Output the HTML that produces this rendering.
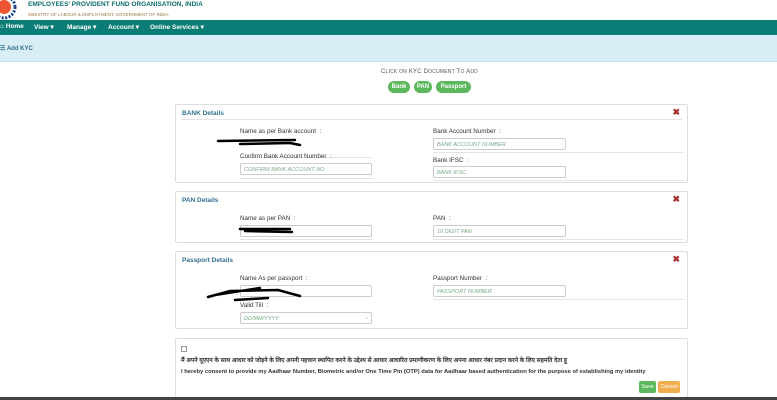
<!DOCTYPE html>
<html><head><meta charset="utf-8"><style>
*{margin:0;padding:0;box-sizing:border-box}
body{width:777px;height:400px;overflow:hidden;background:#fff;font-family:"Liberation Sans",sans-serif;position:relative;color:#333}
.a{position:absolute;white-space:nowrap}
.nav{left:0;top:20px;width:777px;height:15px;background:#0b7d77}
.nav span{position:absolute;top:3px;color:#fff;font-size:6.5px;font-weight:bold}
.band{left:0;top:35px;width:777px;height:27px;background:#d9edf7;border-bottom:1px solid #c4e3f0}
.panel{position:absolute;left:175px;width:513px;border:1px solid #ddd;border-radius:2px;background:#fff}
.t{font-size:6.5px;font-weight:bold;color:#31708f}
.l{font-size:6.3px;color:#333}
.in{position:absolute;height:12px;border:1px solid #ccc;border-radius:2px;font-size:5.5px;font-style:italic;color:#7a8;padding:3px 0 0 3px;white-space:nowrap;background:#fff}
.hr{position:absolute;height:1px;background:#e4e4e4}
.x{position:absolute;right:7px;color:#a33;font-size:9px;font-weight:bold}
.btn{position:absolute;top:81px;height:12px;border-radius:6px;background:#5cb85c;color:#fff;font-size:6px;font-weight:bold;text-align:center;line-height:12px}
</style></head><body>
<svg class="a" style="left:0;top:0" width="20" height="20"><circle cx="4" cy="7" r="11" fill="none" stroke="#1a3d8f" stroke-width="3" stroke-dasharray="2 1.5"/><circle cx="4" cy="7" r="7" fill="#e53"/></svg>
<div class="a" style="left:28px;top:1px;font-size:6.5px;font-weight:bold;color:#0b6e68">EMPLOYEES' PROVIDENT FUND ORGANISATION, INDIA</div>
<div class="a" style="left:28px;top:12px;font-size:4.5px;color:#a0764a">MINISTRY OF LABOUR &amp; EMPLOYMENT, GOVERNMENT OF INDIA</div>
<div class="a nav"><span style="left:0">⌂ Home</span><span style="left:34px">View ▾</span><span style="left:67px">Manage ▾</span><span style="left:108px">Account ▾</span><span style="left:150px">Online Services ▾</span></div>
<div class="a band"></div>
<div class="a" style="left:0;top:45px;font-size:6px;font-weight:bold;color:#31708f">☰ Add KYC</div>
<div class="a" style="left:381px;top:69px;font-size:6px;color:#555;letter-spacing:.2px">C<small>LICK ON</small> KYC D<small>OCUMENT</small> T<small>O</small> A<small>DD</small></div>
<div class="btn a" style="left:388px;width:22px">Bank</div>
<div class="btn a" style="left:414px;width:18px">PAN</div>
<div class="btn a" style="left:436px;width:35px">Passport</div>

<div class="panel" style="top:104px;height:79px">
<div class="a t" style="left:6px;top:5px">BANK Details</div><div class="x" style="top:2px">✖</div>
<div class="hr" style="left:5px;right:5px;top:14px"></div>
<div class="a l" style="left:64px;top:23px">Name as per Bank account &nbsp;:</div>
<div class="a l" style="left:257px;top:23px">Bank Account Number &nbsp;:</div>
<div class="in" style="left:257px;top:33px;width:133px">BANK ACCOUNT NUMBER</div>
<div class="hr" style="left:64px;width:132px;top:52px"></div>
<div class="hr" style="left:257px;width:251px;top:47px"></div>
<div class="a l" style="left:64px;top:48px">Confirm Bank Account Number &nbsp;:</div>
<div class="a l" style="left:257px;top:52px">Bank IFSC &nbsp;:</div>
<div class="in" style="left:64px;top:58px;width:132px">CONFIRM BANK ACCOUNT NO</div>
<div class="in" style="left:257px;top:61px;width:133px">BANK IFSC</div>
<div class="hr" style="left:64px;width:132px;top:73px"></div>
<div class="hr" style="left:257px;width:251px;top:75px"></div>
</div>

<div class="panel" style="top:191px;height:52px">
<div class="a t" style="left:6px;top:5px">PAN Details</div><div class="x" style="top:2px">✖</div>
<div class="a l" style="left:64px;top:23px">Name as per PAN &nbsp;:</div>
<div class="a l" style="left:257px;top:23px">PAN &nbsp;:</div>
<div class="in" style="left:64px;top:33px;width:132px"></div>
<div class="in" style="left:257px;top:33px;width:133px">10 DIGIT PAN</div>
<div class="hr" style="left:64px;width:132px;top:47px"></div>
<div class="hr" style="left:257px;width:251px;top:47px"></div>
</div>

<div class="panel" style="top:251px;height:78px">
<div class="a t" style="left:6px;top:5px">Passport Details</div><div class="x" style="top:2px">✖</div>
<div class="a l" style="left:64px;top:23px">Name As per passport &nbsp;:</div>
<div class="a l" style="left:257px;top:23px">Passport Number &nbsp;:</div>
<div class="in" style="left:64px;top:33px;width:132px"></div>
<div class="in" style="left:257px;top:33px;width:133px">PASSPORT NUMBER</div>
<div class="hr" style="left:257px;width:251px;top:47px"></div>
<div class="a l" style="left:64px;top:50px">Valid Till &nbsp;:</div>
<div class="in" style="left:64px;top:60px;width:132px">DD/MM/YYYY<span style="position:absolute;right:3px;font-style:normal">▫</span></div>
</div>

<div class="panel" style="top:338px;height:60px">
<div class="a" style="left:5px;top:7px;width:6px;height:6px;border:1px solid #999"></div>
<div class="a" style="left:5px;top:17px;font-size:6px;font-weight:bold;color:#333;font-family:'Liberation Sans','Noto Sans CJK SC',sans-serif">मैं अपने यूएएन के साथ आधार को जोड़ने के लिए अपनी पहचान स्थापित करने के उद्देश्य से आधार आधारित प्रमाणीकरण के लिए अपना आधार नंबर प्रदान करने के लिए सहमति देता हू</div>
<div class="a" style="left:5px;top:30px;font-size:5.8px;font-weight:bold;color:#333">I hereby consent to provide my Aadhaar Number, Biometric and/or One Time Pin (OTP) data for Aadhaar based authentication for the purpose of establishing my identity</div>
<div class="a" style="left:463px;top:42px;width:17px;height:12px;background:#5cb85c;border-radius:2px;color:#fff;font-size:5.5px;text-align:center;padding-top:3px">Save</div>
<div class="a" style="left:482px;top:42px;width:22px;height:12px;background:#f0ad4e;border-radius:2px;color:#fff;font-size:5.5px;text-align:center;padding-top:3px">Cancel</div>
</div>
<div class="a" style="left:0;top:397px;width:777px;height:3px;background:#444"></div>

<svg class="a" style="left:0;top:0" width="777" height="400">
<g stroke="#000" fill="none" stroke-linecap="round">
<path d="M218 141 L295 140 M240 144 L290 143 L300 145" stroke-width="2.5"/>
<path d="M240 229 L290 229 M245 231 L292 232" stroke-width="2.5"/>
<path d="M208 297 L230 291 L278 290 L300 296 M215 295 L260 288 M235 300 L268 298" stroke-width="2.5"/>
</g></svg>
</body></html>
